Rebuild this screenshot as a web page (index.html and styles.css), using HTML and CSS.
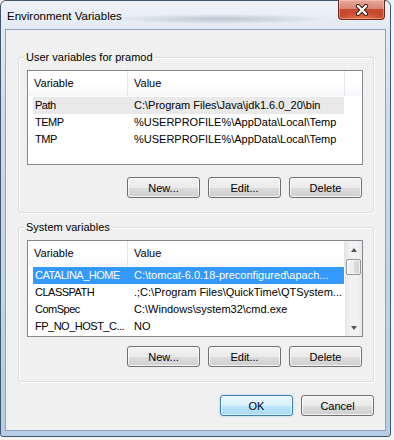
FILE: index.html
```html
<!DOCTYPE html>
<html lang="en">
<head>
  <meta charset="UTF-8" />
  <title>Environment Variables</title>
  <link rel="stylesheet" href="styles.css">
</head>
<body>
  <div class="window">
    <div class="titlebar">
      <span class="title">Environment Variables</span>
      <button class="close-btn" aria-label="Close">
        <svg width="14" height="12" viewBox="0 0 14 12">
          <path d="M3 2 L11 10 M11 2 L3 10" stroke="#3b1a14" stroke-width="4.2" stroke-linecap="round" />
          <path d="M3 2 L11 10 M11 2 L3 10" stroke="#fff" stroke-width="2.4" stroke-linecap="round" />
        </svg>
      </button>
    </div>

    <div class="client">
      <div class="group">
        <div class="group-title">User variables for pramod</div>
        <div class="listview user-list">
          <div class="list-main">
            <div class="list-header">
              <div class="hcell col-var">Variable</div>
              <div class="hcell col-val">Value</div>
              <div class="hcell col-fill"></div>
            </div>
            <div class="list-rows">
              <div class="row row-inactive"><span class="cell-var">Path</span><span class="cell-val">C:\Program Files\Java\jdk1.6.0_20\bin</span></div>
              <div class="row"><span class="cell-var">TEMP</span><span class="cell-val">%USERPROFILE%\AppData\Local\Temp</span></div>
              <div class="row"><span class="cell-var">TMP</span><span class="cell-val">%USERPROFILE%\AppData\Local\Temp</span></div>
            </div>
          </div>
        </div>
        <div class="button-row">
          <button class="btn">New...</button>
          <button class="btn">Edit...</button>
          <button class="btn">Delete</button>
        </div>
      </div>

      <div class="group system-group">
        <div class="group-title">System variables</div>
        <div class="listview system-list">
          <div class="list-main">
            <div class="list-header">
              <div class="hcell col-var">Variable</div>
              <div class="hcell col-val">Value</div>
            </div>
            <div class="list-rows">
              <div class="row row-selected"><span class="cell-var">CATALINA_HOME</span><span class="cell-val">C:\tomcat-6.0.18-preconfigured\apach...</span></div>
              <div class="row"><span class="cell-var">CLASSPATH</span><span class="cell-val">.;C:\Program Files\QuickTime\QTSystem...</span></div>
              <div class="row"><span class="cell-var">ComSpec</span><span class="cell-val">C:\Windows\system32\cmd.exe</span></div>
              <div class="row"><span class="cell-var">FP_NO_HOST_C...</span><span class="cell-val">NO</span></div>
            </div>
          </div>
          <div class="scrollbar">
            <div class="sb-btn"><span class="arrow-up"></span></div>
            <div class="sb-track"><div class="sb-thumb"></div></div>
            <div class="sb-btn"><span class="arrow-down"></span></div>
          </div>
        </div>
        <div class="button-row">
          <button class="btn">New...</button>
          <button class="btn">Edit...</button>
          <button class="btn">Delete</button>
        </div>
      </div>

      <div class="dialog-footer">
        <button class="btn btn-default">OK</button>
        <button class="btn">Cancel</button>
      </div>
    </div>
  </div>
</body>
</html>
```

FILE: styles.css
```css
body {
  margin: 0;
  width: 394px;
  height: 440px;
  background: #f4f4f4;
  font-family: 'Liberation Sans', Arial, sans-serif;
  font-size: 11px;
  color: #000;
  overflow: hidden;
}

.window {
  width: 391px;
  height: 437px;
  box-sizing: border-box;
  border: 1px solid #44566b;
  border-radius: 6px 6px 3px 3px;
  background:
    radial-gradient(ellipse 110px 5px at 220px 18px, rgba(80, 90, 110, 0.28), transparent),
    linear-gradient(to bottom, #eef3f8 0, #e2eaf3 28px, #c9dbee 120px, #b7cde6 100%);
  display: flex;
  flex-direction: column;
}

.titlebar {
  height: 28px;
  display: flex;
  align-items: flex-start;
  padding-left: 6px;
}

.title {
  font-size: 11.5px;
  line-height: 14px;
  padding-top: 8px;
}

.close-btn {
  margin: -1px 5px 0 auto;
  width: 47px;
  height: 20px;
  padding: 0;
  border: 1px solid #6a2a1f;
  border-top: none;
  border-radius: 0 0 4px 4px;
  background:
    radial-gradient(ellipse 22px 7px at 50% 100%, rgba(240, 130, 80, 0.8), transparent),
    linear-gradient(to bottom, #e7aa9c 0, #d98573 45%, #c64a31 50%, #c94a2d 100%);
  box-shadow: inset 0 0 0 1px rgba(255, 210, 200, 0.45);
  display: flex;
  align-items: center;
  justify-content: center;
}

.client {
  margin: 0 4px;
  height: 402px;
  box-sizing: border-box;
  border: 1px solid #8ea3ba;
  background: #f0f0f0;
  display: flex;
  flex-direction: column;
  padding: 27px 11px 0 12px;
}

.group {
  border: 1px solid #d5dfe5;
  border-radius: 3px;
  box-shadow: inset 1px 1px 0 #fff, 1px 1px 0 #fff;
  padding: 0 10px 14px 8px;
}

.system-group {
  margin-top: 14px;
}

.group-title {
  width: fit-content;
  margin: -8px 0 0 -3px;
  padding: 0 2px;
  line-height: 14px;
  background: #f0f0f0;
}

.listview {
  margin-top: 6px;
  border: 1px solid #828790;
  background: #fff;
  box-sizing: border-box;
  display: flex;
}

.user-list {
  height: 95px;
}

.system-list {
  height: 97px;
}

.list-main {
  flex: 1;
  display: flex;
  flex-direction: column;
  min-width: 0;
}

.list-header {
  height: 25px;
  display: flex;
  background: linear-gradient(to bottom, #fff 0, #fff 55%, #f6f7f9 100%);
}

.hcell {
  box-sizing: border-box;
  line-height: 25px;
  padding-left: 6px;
  border-right: 1px solid #e3e5e8;
}

.col-var {
  width: 100px;
}

.col-val {
  width: 217px;
}

.col-fill {
  flex: 1;
  border-right: none;
}

.list-rows {
  padding: 1px 0 0 5px;
}

.row {
  width: 311px;
  height: 17px;
  line-height: 17px;
  display: flex;
  white-space: nowrap;
}

.cell-var {
  width: 95px;
  box-sizing: border-box;
  padding-left: 2px;
  letter-spacing: -0.5px;
  overflow: hidden;
}

.cell-val {
  flex: 1;
  padding-left: 6px;
  overflow: hidden;
}

.row-inactive {
  background: #e9e9e9;
}

.row-selected {
  background: #3399ff;
  color: #fff;
}

.scrollbar {
  width: 17px;
  display: flex;
  flex-direction: column;
  background: linear-gradient(to right, #e6e6e6 0, #f2f2f2 30%, #f2f2f2 70%, #e9e9e9 100%);
}

.sb-btn {
  height: 17px;
  display: flex;
  align-items: center;
  justify-content: center;
}

.arrow-up {
  width: 0;
  height: 0;
  border-left: 3.5px solid transparent;
  border-right: 3.5px solid transparent;
  border-bottom: 4px solid #555;
}

.arrow-down {
  width: 0;
  height: 0;
  border-left: 3.5px solid transparent;
  border-right: 3.5px solid transparent;
  border-top: 4px solid #555;
}

.sb-track {
  flex: 1;
}

.sb-thumb {
  margin: 1px 1px 0;
  height: 16px;
  border: 1px solid #979797;
  border-radius: 2px;
  box-sizing: border-box;
  background: linear-gradient(to right, #f4f4f4 0, #ececec 50%, #dcdcdc 51%, #d2d2d2 100%);
  box-shadow: inset 0 0 0 1px rgba(255, 255, 255, 0.7);
}

.button-row {
  display: flex;
  justify-content: flex-end;
  gap: 8px;
  margin-top: 12px;
  padding-right: 1px;
}

.system-group .button-row {
  margin-top: 9px;
}

.btn {
  width: 73px;
  height: 21px;
  padding: 0;
  font-family: 'Liberation Sans', Arial, sans-serif;
  font-size: 11px;
  color: #000;
  border: 1px solid #707070;
  border-radius: 3px;
  background: linear-gradient(to bottom, #f2f2f2 0, #ebebeb 50%, #dddddd 51%, #cfcfcf 100%);
  box-shadow: inset 0 0 0 1px rgba(255, 255, 255, 0.75);
}

.btn-default {
  border-color: #3c7fb1;
  background: linear-gradient(to bottom, #eaf6fd 0, #d9f0fc 50%, #bee6fd 51%, #a7d9f5 100%);
  box-shadow: inset 0 0 0 1px rgba(255, 255, 255, 0.6), 0 0 2px rgba(60, 160, 220, 0.5);
}

.dialog-footer {
  display: flex;
  justify-content: flex-end;
  gap: 8px;
  margin-top: 13px;
}
```
